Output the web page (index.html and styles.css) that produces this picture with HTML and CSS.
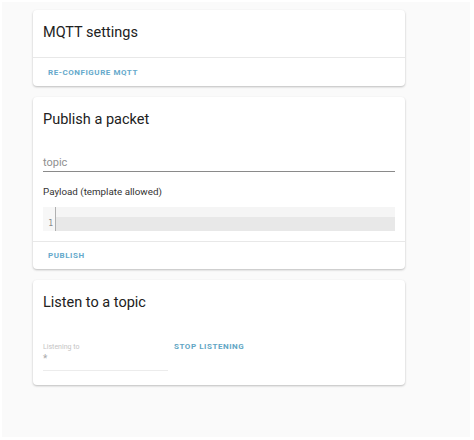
FILE: index.html
```html
<!DOCTYPE html>
<html>
<head>
<meta charset="utf-8">
<link rel="stylesheet" href="styles.css">
</head>
<body>
<div class="page">
  <div class="card">
    <div class="card-header">MQTT settings</div>
    <div class="card-actions"><span class="btn">RE-CONFIGURE MQTT</span></div>
  </div>
  <div class="card">
    <div class="card-header">Publish a packet</div>
    <div class="card-content">
      <div class="input topic"><span class="placeholder">topic</span></div>
      <div class="payload-label">Payload (template allowed)</div>
      <div class="editor">
        <div class="gutter"><span class="lineno">1</span></div>
        <div class="code">
          <div class="code-top"></div>
          <div class="code-active"></div>
        </div>
      </div>
    </div>
    <div class="card-actions"><span class="btn">PUBLISH</span></div>
  </div>
  <div class="card">
    <div class="card-header">Listen to a topic</div>
    <div class="listen-row">
      <div class="listen-input">
        <div class="small-label">Listening to</div>
        <div class="star">*</div>
      </div>
      <span class="btn stop">STOP LISTENING</span>
    </div>
  </div>
</div>
</body>
</html>
```
FILE: styles.css
```css
html, body {
  margin: 0;
  padding: 0;
  background: #ffffff;
  font-family: Roboto, "Liberation Sans", sans-serif;
}
.page {
  margin: 2px 4px 0 2px;
  height: 435px;
  background: #fafafa;
  padding: 8px 0 0 31px;
  box-sizing: border-box;
  display: flex;
  flex-direction: column;
  gap: 11px;
}
.card {
  width: 372px;
  background: #fff;
  border-radius: 4px;
  box-shadow: 0 1px 2px rgba(0,0,0,0.18), 0 1px 3px rgba(0,0,0,0.08);
}
.card-header {
  font-size: 14.5px;
  color: #212121;
  padding: 13px 10px 0;
  height: 34px;
  box-sizing: content-box;
  line-height: 20px;
}
.card-actions {
  border-top: 1px solid #e8e8e8;
  height: 28px;
  display: flex;
  align-items: center;
  padding-left: 15px;
}
.card:nth-child(2) .card-actions {
  height: 27px;
}
.btn {
  font-size: 8px;
  font-weight: 700;
  letter-spacing: 0.55px;
  color: #65a9cb;
}
.card-content {
  padding: 0 10px 10px;
}
.input.topic {
  border-bottom: 1px solid #8a8a8a;
  height: 28px;
  display: flex;
  align-items: flex-end;
  padding-bottom: 2px;
  box-sizing: border-box;
}
.placeholder {
  font-size: 11px;
  color: #8f8f8f;
}
.payload-label {
  font-size: 9.8px;
  color: #333;
  margin-top: 14px;
  height: 20px;
}
.editor {
  display: flex;
  height: 24px;
  margin-top: 1px;
}
.gutter {
  width: 13px;
  background: #f7f7f7;
  border-right: 1px solid #b0b0b0;
  display: flex;
  align-items: flex-end;
  justify-content: flex-end;
  padding: 0 2px 3px 0;
  box-sizing: border-box;
}
.lineno {
  font-family: "DejaVu Sans Mono", monospace;
  font-size: 8px;
  color: #888;
}
.code {
  flex: 1;
  display: flex;
  flex-direction: column;
}
.code-top {
  height: 10px;
  background: #f5f5f5;
}
.code-active {
  flex: 1;
  background: #e8e8e8;
}
.listen-row {
  display: flex;
  align-items: flex-start;
  padding: 11px 10px 14px;
}
.listen-input {
  width: 125px;
  border-bottom: 1px solid #ececec;
  height: 33px;
  box-sizing: border-box;
  padding-top: 5px;
}
.small-label {
  font-size: 7px;
  color: #c4c4c4;
  line-height: 9px;
}
.star {
  font-size: 10px;
  color: #aaa;
  line-height: 10px;
  margin-top: 2px;
}
.btn.stop {
  margin-left: 6px;
  margin-top: 4px;
  color: #62a6c4;
}
```
